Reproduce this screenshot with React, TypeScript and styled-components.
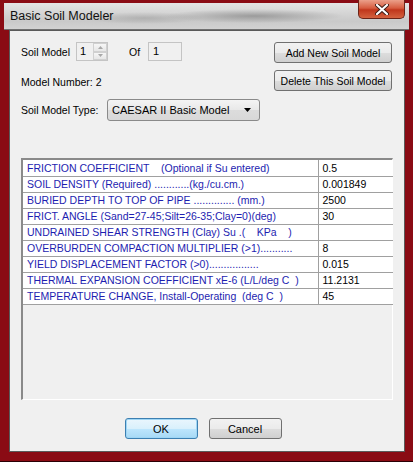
import React from "react";
import styled, { createGlobalStyle } from "styled-components";

const GlobalStyle = createGlobalStyle`
  html, body {
    margin: 0;
    padding: 0;
    background: #8a0b14;
  }
  * {
    box-sizing: border-box;
  }
`;

type SoilRow = { label: string; value: string };

const rows: SoilRow[] = [
  { label: "FRICTION COEFFICIENT    (Optional if Su entered)", value: "0.5" },
  { label: "SOIL DENSITY (Required) ............(kg./cu.cm.)", value: "0.001849" },
  { label: "BURIED DEPTH TO TOP OF PIPE .............. (mm.)", value: "2500" },
  { label: "FRICT. ANGLE (Sand=27-45;Silt=26-35;Clay=0)(deg)", value: "30" },
  { label: "UNDRAINED SHEAR STRENGTH (Clay) Su .(    KPa    )", value: "" },
  { label: "OVERBURDEN COMPACTION MULTIPLIER (>1)...........", value: "8" },
  { label: "YIELD DISPLACEMENT FACTOR (>0).................", value: "0.015" },
  { label: "THERMAL EXPANSION COEFFICIENT xE-6 (L/L/deg C  )", value: "11.2131" },
  { label: "TEMPERATURE CHANGE, Install-Operating  (deg C  )", value: "45" },
];

const App: React.FC = () => {
  return (
    <>
      <GlobalStyle />
      <Window>
        <TitleBar>
          <Title>Basic Soil Modeler</Title>
          <CloseButton>
            <svg width="14" height="11" viewBox="0 0 14 11">
              <path
                d="M2 1 L12 10 M12 1 L2 10"
                stroke="#3a1a14"
                strokeWidth="4"
                strokeLinecap="round"
              />
              <path
                d="M2 1 L12 10 M12 1 L2 10"
                stroke="#ffffff"
                strokeWidth="2.2"
                strokeLinecap="round"
              />
            </svg>
          </CloseButton>
        </TitleBar>

        <Client>
          <TopArea>
            <LeftColumn>
              <ModelRow>
                <Label>Soil Model</Label>
                <SpinBox>
                  <SpinText>1</SpinText>
                  <SpinButtons>
                    <SpinArrow>
                      <svg width="5" height="3" viewBox="0 0 5 3">
                        <path d="M0 3 L2.5 0 L5 3 Z" fill="#a8a8a8" />
                      </svg>
                    </SpinArrow>
                    <SpinArrow>
                      <svg width="5" height="3" viewBox="0 0 5 3">
                        <path d="M0 0 L2.5 3 L5 0 Z" fill="#a8a8a8" />
                      </svg>
                    </SpinArrow>
                  </SpinButtons>
                </SpinBox>
                <OfLabel>Of</OfLabel>
                <CountBox>1</CountBox>
              </ModelRow>
              <NumberRow>
                <Label>Model Number: 2</Label>
              </NumberRow>
              <TypeRow>
                <Label>Soil Model Type:</Label>
                <Dropdown>
                  <span>CAESAR II Basic Model</span>
                  <svg width="7" height="4" viewBox="0 0 7 4">
                    <path d="M0 0 L7 0 L3.5 4 Z" fill="#000" />
                  </svg>
                </Dropdown>
              </TypeRow>
            </LeftColumn>
            <RightColumn>
              <PushButton>Add New Soil Model</PushButton>
              <PushButton>Delete This Soil Model</PushButton>
            </RightColumn>
          </TopArea>

          <GridFrame>
            <Grid>
              <tbody>
                {rows.map((row) => (
                  <tr key={row.label}>
                    <LabelCell>{row.label}</LabelCell>
                    <ValueCell>{row.value}</ValueCell>
                  </tr>
                ))}
              </tbody>
            </Grid>
          </GridFrame>

          <Footer>
            <DialogButton $default>OK</DialogButton>
            <DialogButton>Cancel</DialogButton>
          </Footer>
        </Client>
      </Window>
    </>
  );
};

const Window = styled.div`
  display: flex;
  flex-direction: column;
  width: 413px;
  height: 462px;
  padding: 0 8px 9px 9px;
  background: #8a0b14;
  border-bottom: 1px solid #2a0005;
  font-family: "Liberation Sans", Arial, sans-serif;
  font-size: 10px;
  color: #000;
`;

const TitleBar = styled.div`
  position: relative;
  display: flex;
  align-items: center;
  height: 27px;
  margin: 3px -4px 0 -5px;
  padding: 0 0 1px 6px;
  background:
    radial-gradient(ellipse 90px 7px at 250px 13px, rgba(90, 90, 90, 0.45), transparent),
    radial-gradient(ellipse 60px 6px at 140px 15px, rgba(110, 110, 110, 0.3), transparent),
    linear-gradient(#e4e4e4, #c9c9c9 70%, #d2d2d2);
  border-bottom: 1px solid #707070;
`;

const Title = styled.span`
  font-family: "Liberation Sans", Arial, sans-serif;
  font-size: 12.5px;
  color: #111;
`;

const CloseButton = styled.div`
  position: absolute;
  top: -3px;
  right: 4px;
  display: flex;
  align-items: center;
  justify-content: center;
  width: 47px;
  height: 19px;
  border: 1px solid #6a2418;
  border-top: none;
  border-radius: 0 0 5px 5px;
  background: linear-gradient(#eba08a, #d65c40 45%, #c0361c 55%, #d4623f);
`;

const Client = styled.div`
  flex: 1;
  display: flex;
  flex-direction: column;
  padding: 11px 11px 0 11px;
  background: #f0f0f0;
  border: 1px solid #5a5a5a;
`;

const TopArea = styled.div`
  display: flex;
  justify-content: space-between;
  height: 115px;
`;

const LeftColumn = styled.div`
  display: flex;
  flex-direction: column;
`;

const RightColumn = styled.div`
  display: flex;
  flex-direction: column;
  gap: 7px;
  padding-right: 1px;
`;

const Label = styled.span`
  font-size: 10.5px;
  white-space: nowrap;
`;

const ModelRow = styled.div`
  display: flex;
  align-items: center;
  height: 19px;

  ${Label} {
    width: 55px;
  }
`;

const SpinBox = styled.div`
  display: flex;
  width: 32px;
  height: 19px;
  border: 1px solid #c4c4c4;
  background: #f0f0f0;
`;

const SpinText = styled.span`
  flex: 1;
  padding: 2px 0 0 3px;
  font-size: 11px;
`;

const SpinButtons = styled.div`
  display: flex;
  flex-direction: column;
  width: 14px;
`;

const SpinArrow = styled.div`
  flex: 1;
  display: flex;
  align-items: center;
  justify-content: center;
  border: 1px solid #d0d0d0;
  background: linear-gradient(#f6f6f6, #e6e6e6);
`;

const OfLabel = styled.span`
  margin-left: 21px;
  width: 19px;
  font-size: 10.5px;
`;

const CountBox = styled.div`
  width: 34px;
  height: 19px;
  padding: 2px 0 0 4px;
  border: 1px solid #c4c4c4;
  font-size: 11px;
`;

const NumberRow = styled.div`
  display: flex;
  align-items: center;
  margin-top: 14px;
  height: 13px;
`;

const TypeRow = styled.div`
  display: flex;
  align-items: center;
  margin-top: 11px;
  height: 22px;

  ${Label} {
    width: 86px;
  }
`;

const Dropdown = styled.div`
  display: flex;
  align-items: center;
  justify-content: space-between;
  width: 153px;
  height: 22px;
  padding: 0 8px 0 4px;
  border: 1px solid #8a8a8a;
  border-radius: 3px;
  background: linear-gradient(#f4f4f4, #e8e8e8 50%, #dcdcdc 51%, #d8d8d8);
  font-size: 11px;
`;

const PushButton = styled.div`
  display: flex;
  align-items: center;
  justify-content: center;
  width: 118px;
  height: 21px;
  border: 1px solid #707070;
  border-radius: 3px;
  background: linear-gradient(#f2f2f2, #ebebeb 50%, #dddddd 51%, #cfcfcf);
  font-size: 10.5px;
  white-space: nowrap;
`;

const GridFrame = styled.div`
  height: 242px;
  margin-top: 1px;
  border-top: 2px solid #8a8a8a;
  border-left: 2px solid #8a8a8a;
  border-right: 1px solid #ffffff;
  border-bottom: 1px solid #ffffff;
`;

const Grid = styled.table`
  width: 370px;
  border-collapse: collapse;
  background: #ffffff;
`;

const LabelCell = styled.td`
  width: 295px;
  height: 16px;
  padding: 0 0 0 4px;
  border: 1px solid #a0a0a0;
  border-left: none;
  border-top: none;
  color: #1d1db0;
  font-size: 10.5px;
  white-space: pre;
`;

const ValueCell = styled.td`
  height: 16px;
  padding: 0 0 0 4px;
  border-bottom: 1px solid #a0a0a0;
  color: #000;
  font-size: 10.5px;
`;

const Footer = styled.div`
  display: flex;
  justify-content: center;
  gap: 11px;
  margin-top: 18px;
  padding-right: 8px;
`;

const DialogButton = styled.div<{ $default?: boolean }>`
  display: flex;
  align-items: center;
  justify-content: center;
  width: 73px;
  height: 21px;
  border: 1px solid ${(p) => (p.$default ? "#3c7fb1" : "#707070")};
  border-radius: 3px;
  background: ${(p) =>
    p.$default
      ? "linear-gradient(#eaf6fd, #d9f0fc 50%, #bee6fd 51%, #a7d9f5)"
      : "linear-gradient(#f2f2f2, #ebebeb 50%, #dddddd 51%, #cfcfcf)"};
  box-shadow: ${(p) => (p.$default ? "inset 0 0 0 1px #9fd6f5" : "none")};
  font-size: 11px;
`;

export default App;
